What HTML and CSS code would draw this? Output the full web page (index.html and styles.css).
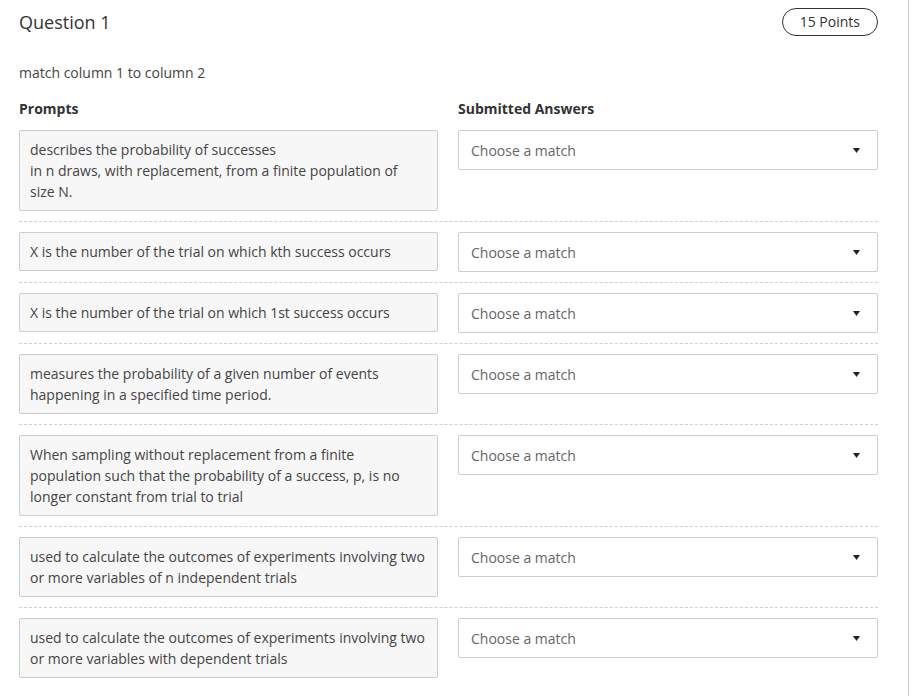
FILE: index.html
```html
<!DOCTYPE html>
<html lang="en">
<head>
    <meta charset="UTF-8">
    <meta name="viewport" content="width=device-width, initial-scale=1.0">
    <title>Question 1</title>
    <link rel="stylesheet" href="styles.css">
</head>
<body>
    <div class="question">
        <div class="question-header">
            <h2 class="question-title">Question 1</h2>
            <span class="points">15 Points</span>
        </div>

        <p class="instructions">match column 1 to column 2</p>

        <div class="columns-head">
            <div>Prompts</div>
            <div>Submitted Answers</div>
        </div>

        <div class="match-list">
            <div class="match-row">
                <div class="prompt">describes the probability of successes<br>in n draws, with replacement, from a finite population of size N.</div>
                <div class="match-select"><span>Choose a match</span><svg class="caret" width="7" height="5" viewBox="0 0 7 5"><path d="M0 0h7L3.5 5z"/></svg></div>
            </div>

            <div class="match-row">
                <div class="prompt">X is the number of the trial on which kth success occurs</div>
                <div class="match-select"><span>Choose a match</span><svg class="caret" width="7" height="5" viewBox="0 0 7 5"><path d="M0 0h7L3.5 5z"/></svg></div>
            </div>

            <div class="match-row">
                <div class="prompt">X is the number of the trial on which 1st success occurs</div>
                <div class="match-select"><span>Choose a match</span><svg class="caret" width="7" height="5" viewBox="0 0 7 5"><path d="M0 0h7L3.5 5z"/></svg></div>
            </div>

            <div class="match-row">
                <div class="prompt">measures the probability of a given number of events happening in a specified time period.</div>
                <div class="match-select"><span>Choose a match</span><svg class="caret" width="7" height="5" viewBox="0 0 7 5"><path d="M0 0h7L3.5 5z"/></svg></div>
            </div>

            <div class="match-row">
                <div class="prompt">When sampling without replacement from a finite population such that the probability of a success, p, is no longer constant from trial to trial</div>
                <div class="match-select"><span>Choose a match</span><svg class="caret" width="7" height="5" viewBox="0 0 7 5"><path d="M0 0h7L3.5 5z"/></svg></div>
            </div>

            <div class="match-row">
                <div class="prompt">used to calculate the outcomes of experiments involving two or more variables of n independent trials</div>
                <div class="match-select"><span>Choose a match</span><svg class="caret" width="7" height="5" viewBox="0 0 7 5"><path d="M0 0h7L3.5 5z"/></svg></div>
            </div>

            <div class="match-row">
                <div class="prompt">used to calculate the outcomes of experiments involving two or more variables with dependent trials</div>
                <div class="match-select"><span>Choose a match</span><svg class="caret" width="7" height="5" viewBox="0 0 7 5"><path d="M0 0h7L3.5 5z"/></svg></div>
            </div>
        </div>
    </div>
</body>
</html>
```

FILE: styles.css
```css
* {
    margin: 0;
    padding: 0;
    box-sizing: border-box;
}

body {
    background-color: #fff;
    font-family: 'Open Sans', 'Noto Sans', sans-serif;
    font-size: 14px;
    line-height: 21px;
    color: #444;
}

.question {
    width: 909px;
    min-height: 100vh;
    padding: 8px 30px 20px 19px;
    border-right: 1px solid #cfcfcf;
}

.question-header {
    display: flex;
    justify-content: space-between;
    align-items: center;
    height: 28px;
}

.question-title {
    font-size: 18px;
    font-weight: normal;
    line-height: 28px;
    color: #333;
}

.points {
    display: inline-block;
    height: 28px;
    padding: 0 17px;
    border: 1px solid #333;
    border-radius: 14px;
    line-height: 26px;
    color: #333;
}

.instructions {
    margin-top: 26px;
}

.columns-head {
    display: grid;
    grid-template-columns: 419px 1fr;
    gap: 20px;
    margin-top: 15px;
    margin-bottom: 11px;
    font-weight: 700;
    color: #333;
}

.match-row {
    display: grid;
    grid-template-columns: 419px 1fr;
    gap: 20px;
    align-items: start;
    padding: 10px 0;
    border-bottom: 1px dashed #cfcfcf;
}

.match-row:first-child {
    padding-top: 0;
}

.match-row:last-child {
    border-bottom: none;
}

.prompt {
    padding: 8px 12px 8px 10px;
    background-color: #f7f7f7;
    border: 1px solid #cdcdcd;
    border-radius: 2px;
}

.match-select {
    display: flex;
    justify-content: space-between;
    align-items: center;
    height: 40px;
    padding: 0 17px 0 12px;
    background-color: #fff;
    border: 1px solid #cdcdcd;
    border-radius: 2px;
    color: #666;
}

.caret {
    fill: #222;
}
```
